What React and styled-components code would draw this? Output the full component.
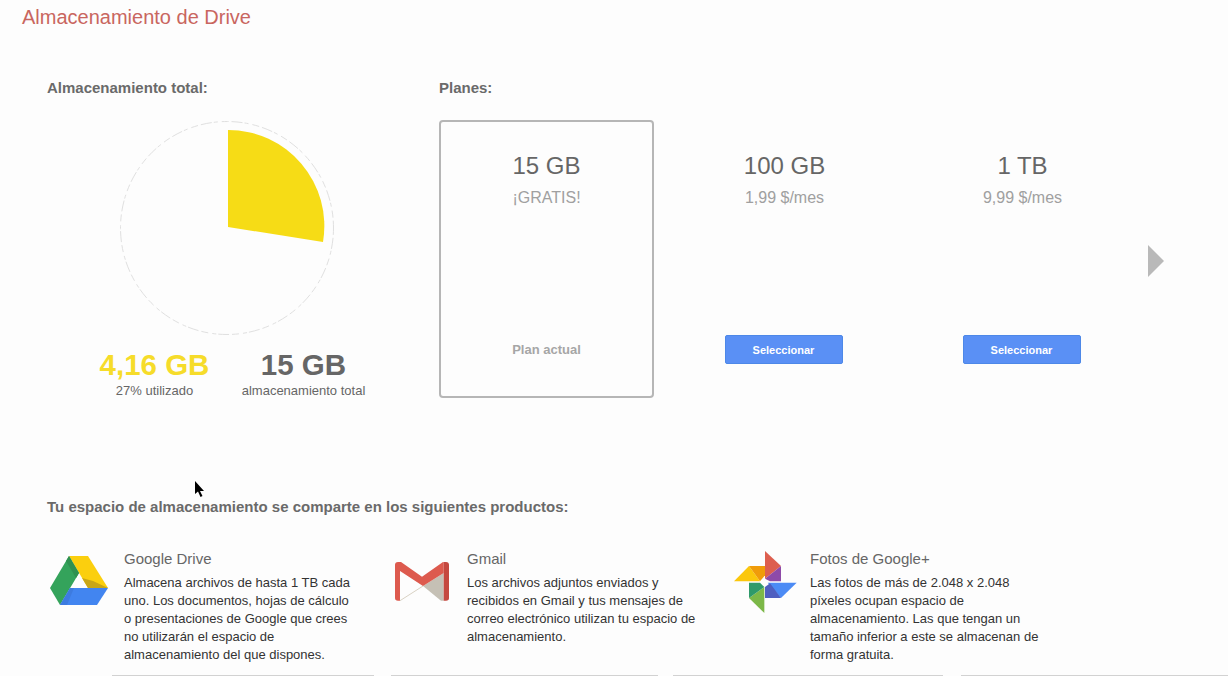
import React from "react"
import styled, { createGlobalStyle } from "styled-components"

const GlobalStyle = createGlobalStyle`
  html, body {
    margin: 0;
    background: #fdfdfd;
    font-family: "Liberation Sans", Arial, sans-serif;
  }
`

const Page = styled.div`
  position: relative;
  width: 1228px;
  height: 676px;
  overflow: hidden;
`
const PageTitle = styled.h1`
  margin: 0;
  padding-left: 22px;
  font-weight: 400;
  font-size: 20px;
  line-height: 34px;
  color: #c9665f;
`
const TopRow = styled.div`
  display: flex;
  margin-top: 46px;
  padding-left: 47px;
`
const StorageColumn = styled.section`
  width: 392px;
`
const Heading = styled.h2`
  margin: 0;
  font-size: 15px;
  line-height: 16px;
  font-weight: 700;
  color: #6a6a6a;
`
const Ring = styled.svg`
  display: block;
  width: 216px;
  height: 216px;
  margin: 24px 0 0 72px;
`
const Stats = styled.div`
  display: flex;
  margin: 11px 0 0 33px;
`
const Stat = styled.div`
  width: 149px;
  text-align: center;
`
const StatValue = styled.div`
  font-size: 29.5px;
  line-height: 36px;
  font-weight: 700;
  color: ${p => p.$color};
`
const StatCaption = styled.div`
  font-size: 13px;
  line-height: 16px;
  color: #666;
`
const PlansColumn = styled.section`
  flex: 1;
`
const PlanRow = styled.div`
  display: flex;
  gap: 23px;
  margin-top: 24px;
`
const PlanCard = styled.div`
  box-sizing: border-box;
  width: 215px;
  height: 278px;
  display: flex;
  flex-direction: column;
  align-items: center;
  padding-top: 29px;
  border: 2px solid ${p => (p.$current ? "#b6b6b6" : "transparent")};
  border-radius: 4px;
`
const PlanSize = styled.div`
  font-size: 24px;
  line-height: 30px;
  color: #666;
`
const PlanPrice = styled.div`
  margin-top: 8px;
  font-size: 16px;
  line-height: 18px;
  color: #a0a0a0;
`
const PlanFooter = styled.div`
  margin-top: auto;
  margin-bottom: 38px;
  font-size: 13px;
  line-height: 16px;
  font-weight: 700;
  color: #a6a6a6;
`
const SelectButton = styled.button`
  box-sizing: border-box;
  width: 118px;
  height: 29px;
  margin: auto 2px 32px 0;
  padding: 0;
  border: 1px solid #4d88e8;
  border-radius: 2px;
  background: #5a90f5;
  color: #fff;
  font: 700 11px "Liberation Sans", Arial, sans-serif;
`
const NextArrow = styled.svg`
  flex: none;
  width: 16px;
  height: 32px;
  margin: 125px 0 0 -5px;
`
const ProductsSection = styled.section`
  margin-top: 100px;
  padding-left: 47px;
`
const ProductGrid = styled.div`
  display: grid;
  grid-template-columns: repeat(3, 343px);
  margin-top: 30px;
`
const Product = styled.article`
  display: flex;
`
const ProductIcon = styled.svg`
  flex: none;
  width: 77px;
  height: 70px;
`
const ProductText = styled.div`
  width: 240px;
  padding-top: 6px;
`
const ProductName = styled.h3`
  margin: 0;
  font-weight: 400;
  font-size: 15px;
  line-height: 16px;
  color: #666;
`
const ProductBody = styled.p`
  margin: 7px 0 0;
  font-size: 13px;
  line-height: 18px;
  color: #333;
  white-space: pre-line;
`
const Dividers = styled.div`
  position: absolute;
  left: 0;
  right: 0;
  bottom: 0;
  display: flex;
  padding-left: 112px;
`
const Divider = styled.div`
  flex: none;
  width: ${p => p.$width}px;
  margin-right: ${p => p.$gap}px;
  height: 1px;
  background: #d2d2d2;
`
const Cursor = styled.svg`
  position: absolute;
  left: 194px;
  top: 481px;
  width: 12px;
  height: 17px;
`

const plans = [
  { size: "15 GB", price: "¡GRATIS!", current: true },
  { size: "100 GB", price: "1,99 $/mes" },
  { size: "1 TB", price: "9,99 $/mes" },
]

function DriveIcon() {
  return (
    <ProductIcon viewBox="0 0 77 70">
      <path d="M22 11 L41 11 L61 43 L41 43 Z" fill="#fbcf0e" />
      <path d="M35 33 L46 36 L61 43 L41 43 Z" fill="#c9a616" />
      <path d="M22 11 L32 28 L13 60 L3 43 Z" fill="#34a35b" />
      <path d="M22 11 L32 28 L29 33 L19 16 Z" fill="#2f9150" />
      <path d="M23 43 L61 43 L50 60 L13 60 Z" fill="#4285f0" />
      <path d="M23 43 L27 43 L20 60 L13 60 Z" fill="#3d7be0" />
    </ProductIcon>
  )
}

function GmailIcon() {
  return (
    <ProductIcon viewBox="0 0 77 70">
      <path d="M10 55.7 L33 41" stroke="#d9d2c4" strokeWidth="1" />
      <path d="M33 41 L53.7 28 L53.7 55.7 L51 55.7 Z" fill="#c5c0b5" />
      <path d="M8 17 Q5 17 5 20 L5 53 Q5 55.7 8 55.7 L10 55.7 L10 26 L33 41 L53.7 28 L53.7 17 L53 17 L32 31.7 L11 17 Z" fill="#dd5a4e" />
      <path d="M53.7 17 L53.7 55.7 L56 55.7 Q59 55.7 59 53 L59 20 Q59 17 56 17 Z" fill="#c5483f" />
    </ProductIcon>
  )
}

function PhotosIcon() {
  return (
    <ProductIcon viewBox="24 9 231 210">
      <path d="M120 27 L168 72 L120 110 Z" fill="#dd5f4f" />
      <path d="M120 110 L168 72 L168 118 L135 118 Z" fill="#8e4aa8" />
      <path d="M27 118 L72 72 L105 118 Z" fill="#fbc70c" />
      <path d="M72 72 L120 72 L120 100 L105 118 Z" fill="#f09c0a" />
      <path d="M128 122 L215 122 L168 168 Z" fill="#4c8bf5" />
      <path d="M120 135 L135 124 L168 168 L120 168 Z" fill="#4f5fc0" />
      <path d="M72 168 L118 135 L118 213 Z" fill="#7cb848" />
      <path d="M72 122 L105 122 L118 135 L72 168 Z" fill="#2f9a6a" />
    </ProductIcon>
  )
}

export default function App() {
  return (
    <Page>
      <GlobalStyle />
      <PageTitle>Almacenamiento de Drive</PageTitle>
      <TopRow>
        <StorageColumn>
          <Heading>Almacenamiento total:</Heading>
          <Ring viewBox="0 0 216 216">
            <circle cx="108" cy="108" r="106.5" fill="none" stroke="#e0e0e0" strokeWidth="1" strokeDasharray="7 3 11 2 4 4" />
            <path d="M109 107 L109 10 A96 96 0 0 1 204 122 Z" fill="#f6dc16" />
          </Ring>
          <Stats>
            <Stat>
              <StatValue $color="#f6dc2a">4,16 GB</StatValue>
              <StatCaption>27% utilizado</StatCaption>
            </Stat>
            <Stat>
              <StatValue $color="#666">15 GB</StatValue>
              <StatCaption>almacenamiento total</StatCaption>
            </Stat>
          </Stats>
        </StorageColumn>
        <PlansColumn>
          <Heading>Planes:</Heading>
          <PlanRow>
            {plans.map(plan => (
              <PlanCard key={plan.size} $current={plan.current}>
                <PlanSize>{plan.size}</PlanSize>
                <PlanPrice>{plan.price}</PlanPrice>
                {plan.current ? <PlanFooter>Plan actual</PlanFooter> : <SelectButton>Seleccionar</SelectButton>}
              </PlanCard>
            ))}
            <NextArrow viewBox="0 0 16 32">
              <path d="M0 0 L16 16 L0 32 Z" fill="#b9b9b9" />
            </NextArrow>
          </PlanRow>
        </PlansColumn>
      </TopRow>
      <ProductsSection>
        <Heading>Tu espacio de almacenamiento se comparte en los siguientes productos:</Heading>
        <ProductGrid>
          <Product>
            <DriveIcon />
            <ProductText>
              <ProductName>Google Drive</ProductName>
              <ProductBody>{"Almacena archivos de hasta 1 TB cada\nuno. Los documentos, hojas de cálculo\no presentaciones de Google que crees\nno utilizarán el espacio de\nalmacenamiento del que dispones."}</ProductBody>
            </ProductText>
          </Product>
          <Product>
            <GmailIcon />
            <ProductText>
              <ProductName>Gmail</ProductName>
              <ProductBody>{"Los archivos adjuntos enviados y\nrecibidos en Gmail y tus mensajes de\ncorreo electrónico utilizan tu espacio de\nalmacenamiento."}</ProductBody>
            </ProductText>
          </Product>
          <Product>
            <PhotosIcon />
            <ProductText>
              <ProductName>Fotos de Google+</ProductName>
              <ProductBody>{"Las fotos de más de 2.048 x 2.048\npíxeles ocupan espacio de\nalmacenamiento. Las que tengan un\ntamaño inferior a este se almacenan de\nforma gratuita."}</ProductBody>
            </ProductText>
          </Product>
        </ProductGrid>
      </ProductsSection>
      <Dividers>
        <Divider $width={262} $gap={17} />
        <Divider $width={267} $gap={15} />
        <Divider $width={270} $gap={18} />
        <Divider $width={267} $gap={0} />
      </Dividers>
      <Cursor viewBox="0 0 12 17">
        <path d="M1 0 L1 13 L4 10.5 L6.5 16 L8.5 15 L6 10 L10 10 Z" fill="#000" />
      </Cursor>
    </Page>
  )
}
